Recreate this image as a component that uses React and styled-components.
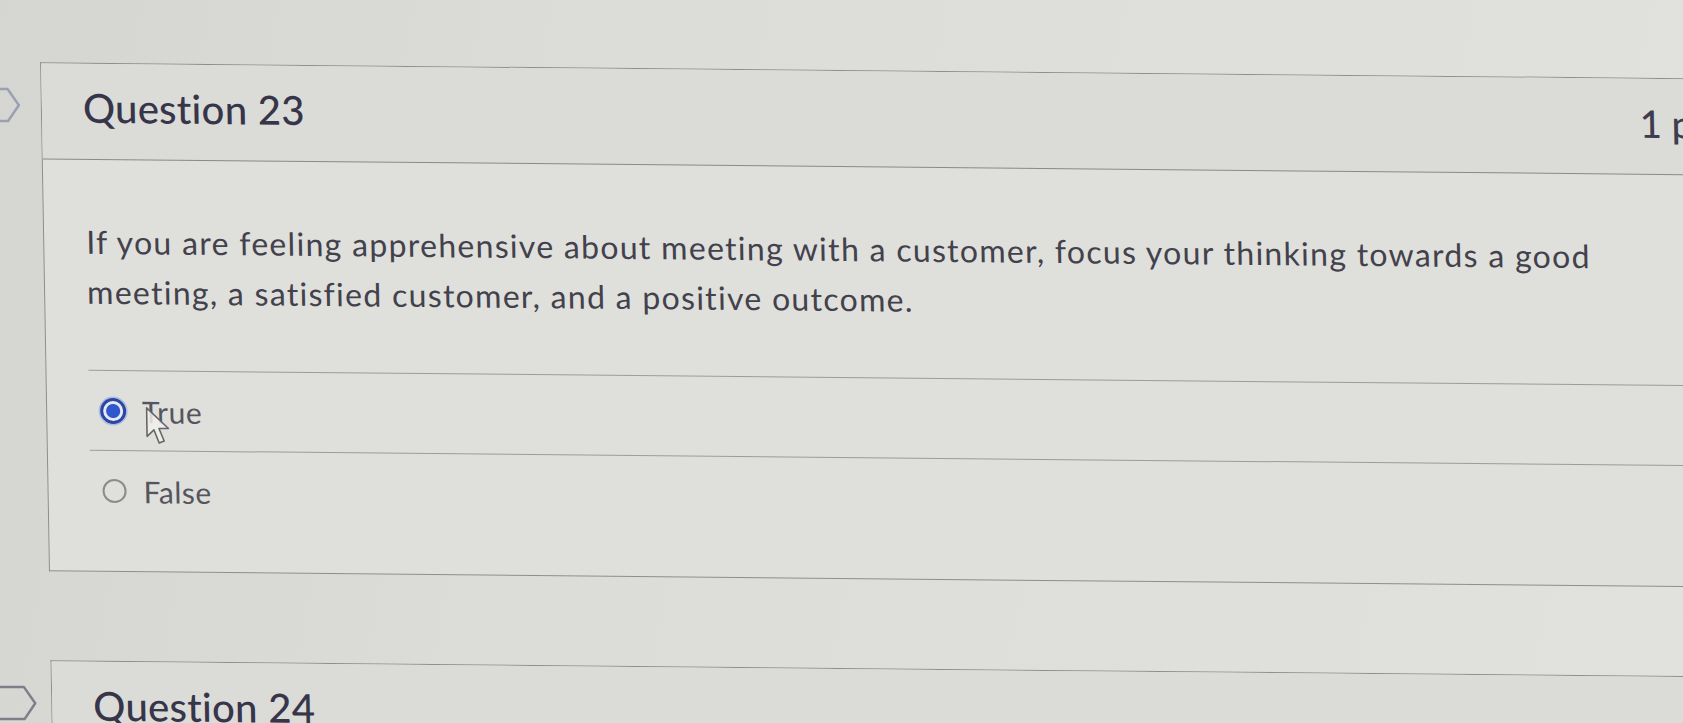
import React from "react"
import styled, { createGlobalStyle } from "styled-components"

const GlobalStyle = createGlobalStyle`
  html, body {
    margin: 0;
    padding: 0;
  }
  body {
    width: 1683px;
    height: 723px;
    overflow: hidden;
    background: #dadad6;
    font-family: Lato, "Noto Sans", sans-serif;
  }
`

const Page = styled.div`
  width: 1683px;
  height: 723px;
  overflow: hidden;
  background: linear-gradient(100deg, #d5d5d1 0%, #dcdcd8 35%, #e1e1dd 100%);
`

// the photo is taken a bit off-axis, so the whole sheet leans
const Sheet = styled.main`
  display: flex;
  flex-direction: column;
  gap: 89px;
  padding: 62px 0 0 39px;
  transform: skew(1deg, 0.55deg);
  transform-origin: 0 0;
`

const Card = styled.section`
  position: relative;
  box-sizing: border-box;
  width: 1722px;
  border: 1.5px solid #8e8e8b;
  border-right: none;
  background: #dfdfdb;
`

const Header = styled.header`
  box-sizing: border-box;
  display: flex;
  align-items: center;
  height: 96px;
  padding: 0 40px 8px 41px;
  background: #dbdbd7;
  border-bottom: 1.5px solid #8a8a87;
`

const Title = styled.h2`
  margin: 0;
  font-size: 40px;
  font-weight: 500;
  letter-spacing: 0.3px;
  color: #36354a;
`

const Points = styled.span`
  margin-left: auto;
  font-size: 38px;
  font-weight: 500;
  color: #3d3c50;
`

const Flag = styled.svg`
  position: absolute;
  top: 24px;
  left: ${p => p.$offset}px;
  width: 46px;
  height: 36px;
  overflow: visible;
`

const Body = styled.div`
  padding: 57px 0 41px 42px;
`

const Prompt = styled.p`
  margin: 0;
  max-width: 1580px;
  font-size: 32px;
  letter-spacing: 1.3px;
  line-height: 50px;
  color: #42414c;
`

const Answers = styled.ul`
  list-style: none;
  margin: 53px 0 0;
  padding: 0;
  border-top: 1.5px solid #9c9c99;
`

const Answer = styled.li`
  position: relative;
  display: flex;
  align-items: center;
  gap: 16px;
  height: 79px;
  padding-left: 11px;
  & + & {
    border-top: 1.5px solid #9c9c99;
  }
`

const Radio = styled.span`
  box-sizing: border-box;
  flex: none;
  width: ${p => (p.$checked ? 26 : 24)}px;
  height: ${p => (p.$checked ? 26 : 24)}px;
  margin: 0 ${p => (p.$checked ? 0 : 1)}px;
  border-radius: 50%;
  border: ${p => (p.$checked ? "3px solid #2b46a3" : "2px solid #8c8c8c")};
  background: ${p =>
    p.$checked
      ? "radial-gradient(circle, #2f58cf 0 6.5px, #e6e9f3 7.5px)"
      : "transparent"};
  box-shadow: ${p => (p.$checked ? "0 0 0 1.5px #aebde6" : "none")};
`

const Label = styled.span`
  font-size: 30px;
  letter-spacing: 0.5px;
  color: #56555e;
`

const Pointer = styled.svg`
  position: absolute;
  left: 56px;
  top: 35px;
  width: 26px;
  height: 40px;
`

const FlagIcon = ({ offset, color }) => (
  <Flag $offset={offset} viewBox="0 0 46 36">
    <path
      d="M0 2 H33 L44 18 L33 34 H0"
      fill="none"
      stroke={color}
      strokeWidth="2.5"
      strokeLinejoin="round"
    />
  </Flag>
)

const answers = [
  { label: "True", checked: true },
  { label: "False", checked: false },
]

const App = () => (
  <Page>
    <GlobalStyle />
    <Sheet>
      <Card>
        <FlagIcon offset={-67} color="#9aa0b3" />
        <Header>
          <Title>Question 23</Title>
          <Points>1 pts</Points>
        </Header>
        <Body>
          <Prompt>
            If you are feeling apprehensive about meeting with a customer, focus your
            thinking towards a good meeting, a satisfied customer, and a positive outcome.
          </Prompt>
          <Answers>
            {answers.map(a => (
              <Answer key={a.label}>
                <Radio $checked={a.checked} />
                <Label>{a.label}</Label>
                {a.checked && (
                  <Pointer viewBox="0 0 26 40">
                    <path
                      d="M1.5 1.5 L1.5 30 L8.5 23.5 L13.5 36.5 L18.5 34.5 L13.5 22 L23 22 Z"
                      fill="rgba(240,240,236,0.85)"
                      stroke="#66666a"
                      strokeWidth="1.6"
                      strokeLinejoin="round"
                    />
                  </Pointer>
                )}
              </Answer>
            ))}
          </Answers>
        </Body>
      </Card>
      <Card>
        <FlagIcon offset={-61} color="#7d8089" />
        <Header>
          <Title>Question 24</Title>
        </Header>
        <Body />
      </Card>
    </Sheet>
  </Page>
)

export default App
